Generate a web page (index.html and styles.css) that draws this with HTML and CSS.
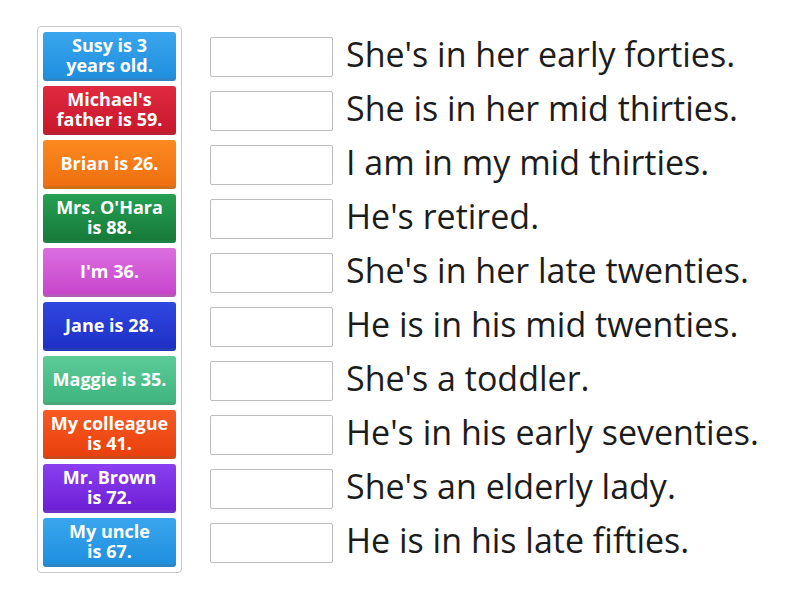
FILE: index.html
```html
<!DOCTYPE html>
<html>
<head>
<meta charset="utf-8">
<link rel="stylesheet" href="styles.css">
</head>
<body>
<div class="game">
  <div class="tiles">
    <div class="tile c-blue">Susy is 3<br>years old.</div>
    <div class="tile c-red">Michael's<br>father is 59.</div>
    <div class="tile c-orange">Brian is 26.</div>
    <div class="tile c-green">Mrs. O'Hara<br>is 88.</div>
    <div class="tile c-pink">I'm 36.</div>
    <div class="tile c-navy">Jane is 28.</div>
    <div class="tile c-mint">Maggie is 35.</div>
    <div class="tile c-flame">My colleague<br>is 41.</div>
    <div class="tile c-purple">Mr. Brown<br>is 72.</div>
    <div class="tile c-blue">My uncle<br>is 67.</div>
  </div>
  <div class="rows">
    <div class="row"><div class="slot"></div><span class="desc">She's in her early forties.</span></div>
    <div class="row"><div class="slot"></div><span class="desc">She is in her mid thirties.</span></div>
    <div class="row"><div class="slot"></div><span class="desc">I am in my mid thirties.</span></div>
    <div class="row"><div class="slot"></div><span class="desc">He's retired.</span></div>
    <div class="row"><div class="slot"></div><span class="desc">She's in her late twenties.</span></div>
    <div class="row"><div class="slot"></div><span class="desc">He is in his mid twenties.</span></div>
    <div class="row"><div class="slot"></div><span class="desc">She's a toddler.</span></div>
    <div class="row"><div class="slot"></div><span class="desc">He's in his early seventies.</span></div>
    <div class="row"><div class="slot"></div><span class="desc">She's an elderly lady.</span></div>
    <div class="row"><div class="slot"></div><span class="desc">He is in his late fifties.</span></div>
  </div>
</div>
</body>
</html>
```
FILE: styles.css
```css
html, body {
  margin: 0;
  padding: 0;
  background: #fff;
  font-family: "Open Sans", "Liberation Sans", sans-serif;
}
.game {
  display: flex;
  align-items: flex-start;
  padding: 26px 0 0 37px;
}
.tiles {
  display: flex;
  flex-direction: column;
  gap: 5px;
  padding: 5px;
  border: 1px solid #c8c8c8;
  border-radius: 4px;
  width: 133px;
}
.tile {
  height: 49px;
  box-sizing: border-box;
  border-radius: 3px;
  display: flex;
  align-items: center;
  justify-content: center;
  text-align: center;
  color: #fff;
  font-weight: 700;
  font-size: 18px;
  line-height: 20px;
  border-bottom: 3px solid rgba(0,0,0,0.18);
  white-space: nowrap;
}
.c-blue { background: linear-gradient(#3aa6ee, #1f8fde); }
.c-red { background: linear-gradient(#e02a40, #c9172c); }
.c-orange { background: linear-gradient(#fb8a20, #f06f10); }
.c-green { background: linear-gradient(#26a052, #177a3a); }
.c-pink { background: linear-gradient(#dc6fe0, #c746cc); }
.c-navy { background: linear-gradient(#3048e0, #1e2fc6); }
.c-mint { background: linear-gradient(#5ccb98, #3fb57f); }
.c-flame { background: linear-gradient(#f85a22, #e8400e); }
.c-purple { background: linear-gradient(#8a3ff0, #6d1fd6); }
.rows {
  display: flex;
  flex-direction: column;
  gap: 5px;
  padding-top: 6px;
  margin-left: 28px;
}
.row {
  height: 49px;
  display: flex;
  align-items: center;
}
.slot {
  width: 123px;
  height: 40px;
  box-sizing: border-box;
  border: 1px solid #bdbdbd;
  border-radius: 2px;
  background: #fff;
  flex: none;
}
.desc {
  margin-left: 13px;
  font-size: 34px;
  line-height: 40px;
  margin-top: -6px;
  color: #1c1c1c;
  white-space: nowrap;
}
```
